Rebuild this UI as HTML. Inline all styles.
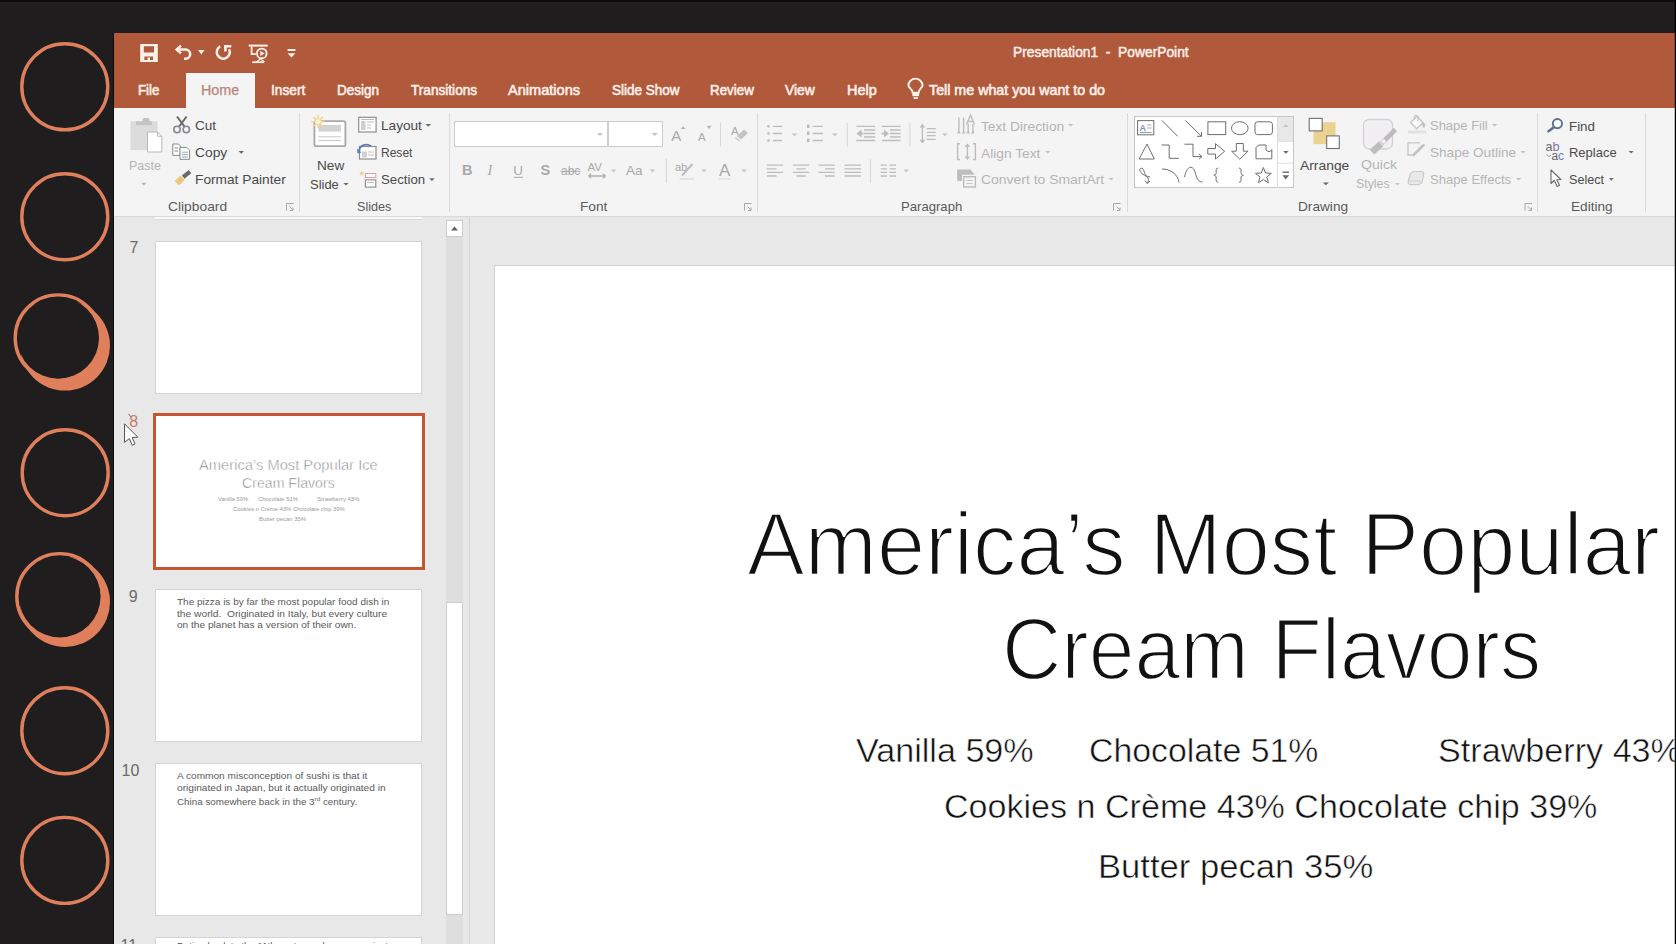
<!DOCTYPE html>
<html><head><meta charset="utf-8">
<style>
html,body{margin:0;padding:0;}
body{width:1676px;height:944px;overflow:hidden;position:relative;background:#1f1d1e;font-family:"Liberation Sans",sans-serif;}
.a{position:absolute;}
.t{position:absolute;white-space:pre;line-height:1;transform-origin:0 0;}
</style></head><body>
<!-- top very dark strip -->
<div class="a" style="left:0;top:0;width:1676px;height:2px;background:#0c0b0b"></div>
<!-- circles -->
<svg class="a" style="left:0;top:0" width="113" height="944" viewBox="0 0 113 944">
 <g fill="#e07f5b">
  <circle cx="65" cy="345.6" r="45"/>
  <circle cx="65" cy="602" r="45"/>
 </g>
 <g fill="#1f1d1e">
  <circle cx="58.2" cy="337.9" r="40.8"/>
  <circle cx="59.8" cy="596.6" r="40.8"/>
 </g>
 <g fill="none" stroke="#e07f5b" stroke-width="3.4">
  <circle cx="64.8" cy="86.8" r="43"/>
  <circle cx="64.8" cy="216.8" r="43"/>
  <circle cx="65.2" cy="472.7" r="43"/>
  <circle cx="64.8" cy="730.7" r="43"/>
  <circle cx="64.8" cy="860.4" r="43"/>
  <circle cx="58.2" cy="337.9" r="43"/>
  <circle cx="59.8" cy="596.6" r="43"/>
 </g>
</svg>
<!-- app window -->
<div class="a" style="left:113px;top:33px;width:1563px;height:911px;background:#e8e8e8"></div>
<div class="a" style="left:113px;top:33px;width:1px;height:911px;background:#0a0a0a"></div>
<div class="a" style="left:114px;top:33px;width:1562px;height:75px;background:#b15a3b"></div>
<div class="a" style="left:186px;top:73px;width:69px;height:35px;background:#f4f4f4"></div>
<div class="a" style="left:114px;top:108px;width:1562px;height:109px;background:#f4f4f4"></div>
<div class="a" style="left:114px;top:216px;width:1562px;height:1px;background:#d9d9d9"></div>

<!-- group separators -->
<div class="a" style="left:299px;top:113px;width:1px;height:99px;background:#dadada"></div>
<div class="a" style="left:449px;top:113px;width:1px;height:99px;background:#dadada"></div>
<div class="a" style="left:757px;top:113px;width:1px;height:99px;background:#dadada"></div>
<div class="a" style="left:1127px;top:113px;width:1px;height:99px;background:#dadada"></div>
<div class="a" style="left:1537px;top:113px;width:1px;height:99px;background:#dadada"></div>
<div class="a" style="left:1645px;top:113px;width:1px;height:99px;background:#dadada"></div>

<!-- font boxes -->
<div class="a" style="left:454px;top:121px;width:154px;height:26px;background:#fff;border:1px solid #cdcdcd;box-sizing:border-box"></div>
<div class="a" style="left:608px;top:121px;width:55px;height:26px;background:#fff;border:1px solid #cdcdcd;box-sizing:border-box"></div>

<!-- shapes gallery -->
<div class="a" style="left:1134px;top:116px;width:160px;height:72px;background:#fff;border:1px solid #c6c6c6;box-sizing:border-box"></div>
<div class="a" style="left:1277px;top:117px;width:16px;height:24px;background:#e8e8e8"></div>
<div class="a" style="left:1277px;top:116px;width:1px;height:72px;background:#dcdcdc"></div>

<!-- slide panel -->
<div class="a" style="left:155px;top:217px;width:267px;height:2px;background:#fafafa;border-bottom:1px solid #d8d8d8"></div>
<div class="a" style="left:155px;top:241px;width:267px;height:153px;background:#fff;border:1px solid #d4d4d4;box-sizing:border-box"></div>
<div class="a" style="left:152.5px;top:413px;width:272px;height:157px;background:#fff;border:3px solid #c4572f;box-sizing:border-box"></div>
<div class="a" style="left:155px;top:589px;width:267px;height:153px;background:#fff;border:1px solid #d4d4d4;box-sizing:border-box"></div>
<div class="a" style="left:155px;top:763px;width:267px;height:153px;background:#fff;border:1px solid #d4d4d4;box-sizing:border-box"></div>
<div class="a" style="left:155px;top:937px;width:267px;height:153px;background:#fff;border:1px solid #d4d4d4;box-sizing:border-box"></div>
<!-- scrollbar -->
<div class="a" style="left:446px;top:220px;width:17px;height:724px;background:#dedede"></div>
<div class="a" style="left:446px;top:220px;width:17px;height:17px;background:#fff;border:1px solid #cdcdcd;box-sizing:border-box"></div>
<svg class="a" style="left:446px;top:220px" width="17" height="17"><path d="M5 10.5 L8.5 6.5 L12 10.5 Z" fill="#606060"/></svg>
<div class="a" style="left:446px;top:602px;width:17px;height:313px;background:#fff;border:1px solid #cdcdcd;box-sizing:border-box"></div>
<div class="a" style="left:468.5px;top:217px;width:1.5px;height:727px;background:#d2d2d2"></div>

<!-- main slide -->
<div class="a" style="left:494px;top:265px;width:1182px;height:679px;background:#fff;border-left:1px solid #d2d2d2;border-top:1px solid #d2d2d2;box-sizing:border-box"></div>

<!--ICONS_START--><svg class="a" style="left:0;top:0" width="1676" height="944" viewBox="0 0 1676 944">
<!-- ===== QAT (white) ===== -->
<g fill="#fdf1ec" stroke="none">
 <!-- save -->
 <path d="M140.2 44 H157.8 V61.9 H140.2 Z M143.8 46.3 V52.5 H154 V46.3 Z M144.4 56.5 V59.9 H147.5 V57.6 H150 V59.9 H153 V56.5 Z" fill-rule="evenodd"/>
 <!-- undo dropdown -->
 <path d="M198 50 H204.5 L201.25 54.6 Z"/>
 <!-- customize -->
 <rect x="287.6" y="49" width="7.8" height="2"/>
 <path d="M287.6 53.2 H295.4 L291.5 57.4 Z"/>
</g>
<g fill="none" stroke="#fdf1ec" stroke-width="2.5" stroke-linecap="butt">
 <!-- undo -->
 <path d="M181 45.6 L176.6 49.5 L181 53.4" stroke-linejoin="miter"/>
 <path d="M176.5 49.5 H185.6 A4.6 4.6 0 0 1 185.6 58.7 H184"/>
 <!-- redo circle -->
 <path d="M220.2 46.4 A6.5 6.5 0 1 0 229.1 49.2"/>
 <path d="M231.3 46.2 H225.4 V51.6" stroke-width="2.6"/>
 <!-- presenter -->
 <path d="M248.7 45.6 H267.7" stroke-width="2"/>
 <path d="M251.6 46.6 V54.2 H256" stroke-width="1.8"/>
 <circle cx="261.8" cy="53.4" r="4.8" stroke-width="1.8"/>
 <path d="M252.2 62.2 H264" stroke-width="1.8"/>
 <path d="M256.5 62 L261.5 58 M264.5 62 L259.5 58" stroke-width="1.3"/>
</g>
<g fill="#fdf1ec">
 <path d="M260.3 50.8 L264.6 53.4 L260.3 56 Z"/>
</g>
<!-- bulb -->
<g fill="none" stroke="#fdf1ec" stroke-width="1.9">
 <path d="M912.6 92.6 C912.6 89 908.4 87.5 908.4 85.7 A6.9 6.9 0 1 1 922.5 85.7 C922.5 87.5 918.8 89 918.8 92.6 Z"/>
</g>
<rect x="912.4" y="92.6" width="6.6" height="3.6" fill="#fdf1ec"/>
<rect x="913.6" y="97.2" width="4.3" height="1.8" fill="#fdf1ec"/>

<!-- ===== Clipboard ===== -->
<rect x="130.5" y="121.3" width="27.1" height="28.8" fill="#dcdcdc"/>
<rect x="136" y="121.3" width="16" height="3.8" fill="#c3c3c3"/>
<rect x="142.5" y="118" width="7" height="4.2" rx="1.5" fill="#c3c3c3"/>
<path d="M147.5 132 H157.5 L161.8 136.3 V152 H147.5 Z" fill="#fff" stroke="#b9b9b9" stroke-width="1"/>
<path d="M157.5 132 V136.3 H161.8" fill="none" stroke="#b9b9b9" stroke-width="1"/>
<path d="M141.1 182.8 H146.6 L143.85 185.4 Z" fill="#b5b5b5"/>
<!-- scissors -->
<path d="M177 116.5 L184.8 127 M186.6 116.5 L178.8 127" stroke="#6a6a6a" stroke-width="2" fill="none"/>
<circle cx="177" cy="129.5" r="3.2" fill="none" stroke="#85879a" stroke-width="1.6"/>
<circle cx="186.3" cy="129.5" r="3.2" fill="none" stroke="#85879a" stroke-width="1.6"/>
<!-- copy -->
<path d="M172.8 144 H178.5 L180.2 145.8 V155.4 H172.8 Z" fill="#fff" stroke="#888" stroke-width="1"/>
<path d="M174.5 148 H178 M174.5 151 H178" stroke="#777" stroke-width="0.9"/>
<path d="M180 147.4 H186.8 L189.6 150.2 V159.3 H180 Z" fill="#fff" stroke="#888" stroke-width="1"/>
<path d="M181.8 152.2 H188 M181.8 154.6 H188 M181.8 157 H188" stroke="#8a9ab5" stroke-width="0.9"/>
<!-- format painter -->
<path d="M176.8 183.2 L182.6 177.8" stroke="#e8c97c" stroke-width="6.2"/>
<path d="M183.2 177.2 L190 171.6" stroke="#6a6a6a" stroke-width="4.2"/>

<!-- dropdown arrows in ribbon -->
<g fill="#6a6a6a">
 <path d="M238.5 151 H244 L241.25 153.8 Z"/>
 <path d="M343.3 183 H348.6 L345.95 185.6 Z"/>
 <path d="M425.5 124 H431 L428.25 126.8 Z"/>
 <path d="M429.2 178.2 H434.7 L431.95 181 Z"/>
 <path d="M1322.9 182.5 H1328.8 L1325.85 185.3 Z"/>
 <path d="M1628.6 151 H1633.6 L1631.1 153.6 Z"/>
 <path d="M1609 178.1 H1613.7 L1611.35 180.7 Z"/>
 <path d="M1283.1 151 H1288.7 L1285.9 153.7 Z"/>
 <rect x="1282.5" y="171.5" width="6.6" height="1.4"/>
 <path d="M1282.5 175.3 H1289.1 L1285.8 179.4 Z"/>
</g>
<g fill="#c4c4c4">
 <path d="M597 133 H603 L600 136 Z"/>
 <path d="M651.6 133 H657.9 L654.75 136 Z"/>
 <path d="M611 169.6 H616.3 L613.65 172.3 Z"/>
 <path d="M649.4 169.6 H655.2 L652.3 172.3 Z"/>
 <path d="M701.3 169.6 H706.7 L704 172.3 Z"/>
 <path d="M741.2 169.6 H747 L744.1 172.3 Z"/>
 <path d="M791.7 133.5 H797.4 L794.55 136.2 Z"/>
 <path d="M832 133.5 H837.7 L834.85 136.2 Z"/>
 <path d="M942 133.5 H947.6 L944.8 136.2 Z"/>
 <path d="M903.4 169.6 H909.1 L906.25 172.3 Z"/>
 <path d="M1068 124 H1073.5 L1070.75 126.6 Z"/>
 <path d="M1045 151 H1050.5 L1047.75 153.6 Z"/>
 <path d="M1108.3 178 H1113.8 L1111.05 180.6 Z"/>
 <path d="M1394.9 183 H1399.9 L1397.4 185.5 Z"/>
 <path d="M1492 124 H1497.3 L1494.65 126.6 Z"/>
 <path d="M1520.5 151 H1525.8 L1523.15 153.6 Z"/>
 <path d="M1516 178 H1521.3 L1518.65 180.6 Z"/>
 <path d="M1283 127 H1288.6 L1285.8 124.3 Z"/>
</g>
<!-- launchers -->
<g fill="none" stroke="#a8a8a8" stroke-width="1">
 <path d="M286.5 210.5 V203.5 H293.5"/><path d="M289.5 206.5 L293 210 M293 207.5 V210.5 H290"/>
 <path d="M744.5 210.5 V203.5 H751.5"/><path d="M747.5 206.5 L751 210 M751 207.5 V210.5 H748"/>
 <path d="M1113.5 210.5 V203.5 H1120.5"/><path d="M1116.5 206.5 L1120 210 M1120 207.5 V210.5 H1117"/>
 <path d="M1525 210.5 V203.5 H1532"/><path d="M1528 206.5 L1531.5 210 M1531.5 207.5 V210.5 H1528.5"/>
</g>

<!-- ===== Slides ===== -->
<rect x="314.4" y="121.2" width="31" height="25" rx="2" fill="#fff" stroke="#a9a9a9" stroke-width="1.8"/>
<rect x="318.5" y="125" width="22.5" height="6.6" fill="#d3d3d3"/>
<path d="M318.5 136.8 H341 M318.5 140.6 H341" stroke="#c6c6c6" stroke-width="1"/>
<g stroke="#f0d48a" stroke-width="1.4">
 <path d="M318.1 115 V128.4 M311.4 121.7 H324.8 M313.4 117 L322.8 126.4 M322.8 117 L313.4 126.4"/>
</g>
<circle cx="318.1" cy="121.7" r="3.2" fill="#fbf3dc" stroke="#f0d48a" stroke-width="1"/>
<!-- layout -->
<rect x="358.7" y="117.3" width="17.4" height="14.7" fill="#fff" stroke="#8d8d8d" stroke-width="1.2"/>
<rect x="361" y="121" width="4.5" height="9" fill="#cfcfcf"/>
<path d="M361 119.5 H374 M367 122 H374 M367 125 H371 M367 128 H371" stroke="#bdbdbd" stroke-width="1"/>
<!-- reset -->
<rect x="359.5" y="146.5" width="16.5" height="12.5" fill="#fff" stroke="#8d8d8d" stroke-width="1.2"/>
<rect x="362" y="151.5" width="5" height="6" fill="#d0d0d0"/>
<path d="M368 152 H374 M368 155 H374" stroke="#bdbdbd" stroke-width="1"/>
<path d="M359.5 151 A7 5.5 0 0 1 371 146" fill="none" stroke="#5b7fb5" stroke-width="1.8"/>
<path d="M357 148.5 L361.5 152.5 L357.5 153.5 Z" fill="#5b7fb5"/>
<!-- section -->
<rect x="365.4" y="173.5" width="10.4" height="4" fill="#fff" stroke="#d9a0a0" stroke-width="1"/>
<rect x="365.4" y="179.9" width="10.4" height="7.2" fill="#fff" stroke="#8d8d8d" stroke-width="1.1"/>
<path d="M367 182.5 H374" stroke="#bbb" stroke-width="1"/>
<path d="M361.7 170.4 L362.5 172.3 L364.5 172.7 L363 174 L363.4 175.8 L361.7 174.8 L360 175.8 L360.4 174 L359 172.7 L361 172.3 Z" fill="#efd38c"/>

<!-- ===== Font icons (disabled gray) ===== -->
<g fill="#a9a9a9" font-family="Liberation Sans" >
 <text x="462" y="175.3" font-size="14.5" font-weight="bold">B</text>
 <text x="487.6" y="175.3" font-size="14.5" font-style="italic" font-family="Liberation Serif">I</text>
 <text x="513.3" y="175.3" font-size="13.5">U</text>
 <text x="540.5" y="175.3" font-size="14.5" font-weight="bold">S</text>
 <text x="561" y="175.3" font-size="12">abc</text>
 <text x="587.5" y="170.6" font-size="11.5">AV</text>
 <text x="671.2" y="141" font-size="15">A</text>
 <text x="698" y="141" font-size="11.5">A</text>
 <text x="626" y="175.2" font-size="13.5">Aa</text>
 <text x="719" y="176.4" font-size="17">A</text>
 <text x="731" y="134.7" font-size="11.5">A</text>
 <text x="675" y="170.5" font-size="11">ab</text>
</g>
<path d="M513.7 177.4 H523" stroke="#b5b5b5" stroke-width="1.2"/>
<path d="M560.5 171.3 H580.5" stroke="#a9a9a9" stroke-width="1"/>
<path d="M588.5 176 H605.5 M588.5 176 L591 173.8 M588.5 176 L591 178.2 M605.5 176 L603 173.8 M605.5 176 L603 178.2" stroke="#b0b0b0" stroke-width="1.3" fill="none"/>
<path d="M680.7 128.9 L683.15 126.2 L685.6 128.9 Z M706.7 125.7 H711.6 L709.15 128.9 Z" fill="#b5b5b5"/>
<path d="M737 136 L744 129.5 L748 133 L741 139.5 Z" fill="#c3c3c3"/>
<path d="M735.5 137.5 L739.5 141" stroke="#c8c8c8" stroke-width="1.5"/>
<path d="M682 175.5 L692.5 164" stroke="#bcbcbc" stroke-width="2"/><path d="M679.5 179 H694" stroke="#e3e3e3" stroke-width="2"/>
<rect x="719" y="178" width="11.5" height="2" fill="#e6e6e6"/>
<path d="M720.6 122.6 V146.3 M666.4 158.9 V183 M847.3 123 V146.7 M909.9 123 V146.7 M870.5 159.2 V183" stroke="#d6d6d6" stroke-width="1"/>

<!-- ===== Paragraph icons ===== -->
<g stroke="#bdbdbd" stroke-width="1.3" fill="none">
 <path d="M773 126.3 H782.1 M773 133.5 H782.1 M773 140.5 H782.1"/>
 <path d="M812.7 126.3 H822.9 M812.7 133.5 H822.9 M812.7 140.5 H822.9"/>
 <path d="M856.4 126.3 H875.1 M864 130 H875.1 M864 133.5 H875.1 M864 137 H875.1 M856.4 140.5 H875.1"/>
 <path d="M881.9 126.3 H900.6 M890 130 H900.6 M890 133.5 H900.6 M890 137 H900.6 M881.9 140.5 H900.6"/>
 <path d="M926.7 128.6 H935.7 M926.7 132.4 H935.7 M926.7 135.7 H935.7 M926.7 139.4 H935.7"/>
 <path d="M922.4 126 V142"/>
 <path d="M766.8 165.2 H783.2 M766.8 168.8 H776.5 M766.8 172.3 H783.2 M766.8 176 H776.5"/>
 <path d="M792.9 165.2 H809.3 M796.5 168.8 H805.7 M792.9 172.3 H809.3 M796.5 176 H805.7"/>
 <path d="M818.4 165.2 H834.8 M825 168.8 H834.8 M818.4 172.3 H834.8 M825 176 H834.8"/>
 <path d="M844.5 165.2 H860.9 M844.5 168.8 H860.9 M844.5 172.3 H860.9 M844.5 176 H860.9"/>
 <path d="M880.7 165.2 H887 M889.5 165.2 H896 M880.7 168.8 H887 M889.5 168.8 H896 M880.7 172.3 H887 M889.5 172.3 H896 M880.7 176 H887 M889.5 176 H896"/>
</g>
<g fill="#bdbdbd">
 <circle cx="768.5" cy="126.3" r="1.3"/><circle cx="768.5" cy="133.5" r="1.3"/><circle cx="768.5" cy="140.5" r="1.3"/>
 <rect x="807" y="124.5" width="2.5" height="3.5"/><rect x="807" y="131.5" width="2.5" height="3.5"/><rect x="807" y="138.5" width="2.5" height="3.5"/>
 <path d="M856.4 133.5 L861.5 129.5 V137.5 Z"/><rect x="860" y="132.5" width="3.5" height="2"/>
 <path d="M889 133.5 L884 129.5 V137.5 Z"/><rect x="881.5" y="132.5" width="3.5" height="2"/>
 <path d="M922.4 123.8 L919.5 127.5 H925.3 Z M922.4 143.5 L919.5 139.8 H925.3 Z"/>
</g>
<!-- text direction, align, convert -->
<g stroke="#bdbdbd" stroke-width="1.4" fill="none">
 <path d="M958.9 117.5 V132 M963.6 117.5 V132 M968.2 124 V132 M972.9 124 V132"/>
 <path d="M966.5 124.5 L970.5 115 L974.5 124.5 M967.8 121.5 H973.2"/>
 <path d="M960 143.8 H957.6 V159.5 H960 M973 143.8 H975.4 V159.5 H973"/>
 <path d="M967.4 146 V157.5"/>
 <path d="M963.7 176.8 H975.4 V187 H963.7 Z"/>
 <path d="M966.5 180.5 H972.5 M966.5 183.5 H972.5" stroke-width="0.9"/>
</g>
<g fill="#bdbdbd">
 <path d="M957 133.5 L958.9 130.5 L960.8 133.5 Z M961.7 133.5 L963.6 130.5 L965.5 133.5 Z M966.3 133.5 L968.2 130.5 L970.1 133.5 Z M971 133.5 L972.9 130.5 L974.8 133.5 Z" transform="translate(0,0) scale(1,1)"/>
 <path d="M967.4 143.5 L964.5 147 H970.3 Z M967.4 160 L964.5 156.5 H970.3 Z"/>
 <path d="M957.2 169.6 H970.5 L974.6 174.7 H962 V181 H957.2 Z"/>
</g>

<!-- ===== Shapes gallery ===== -->
<g fill="none" stroke="#6e6e6e" stroke-width="1">
 <rect x="1137.6" y="120.6" width="16.2" height="14.2"/>
 <path d="M1140 132.5 H1151.5" stroke="#999"/>
 <path d="M1147 125 H1151.5 M1147 128 H1151.5" stroke="#aaa"/>
 <path d="M1161.9 120.4 L1177.7 136.3"/>
 <path d="M1185.3 120.4 L1201.5 136.3 M1201.5 136.3 V132 M1201.5 136.3 H1197"/>
 <rect x="1207.9" y="121.8" width="17.8" height="12.8"/>
 <ellipse cx="1239.8" cy="128.2" rx="8.3" ry="6.5"/>
 <rect x="1255" y="121.8" width="17.4" height="12.8" rx="2.5"/>
 <path d="M1147 144 L1154.3 159 H1139.1 Z"/>
 <path d="M1161.5 145 H1169.2 V158.3 H1179"/>
 <path d="M1184.5 144.2 H1193 V156.6 H1202 M1202 156.6 L1199 154 M1202 156.6 L1199 159.2"/>
 <path d="M1207.8 148.5 H1215.5 V143.6 L1224.6 151.3 L1215.5 159 V154.1 H1207.8 Z"/>
 <path d="M1236.3 143.5 H1243.3 V151.2 H1248 L1239.8 159.2 L1231.6 151.2 H1236.3 Z"/>
 <path d="M1258.5 145 H1266 V147.5 A2.6 2.6 0 0 0 1271.8 149.5 V158.8 H1256 V147.5 Z"/>
 <path d="M1150 177 C1143 176 1146 172 1142 168 C1138 169 1139.5 173 1146 176 C1150 178 1148 183 1147 183.5"/>
 <path d="M1147 183.5 L1145 180.5 M1147 183.5 L1150 181"/>
 <path d="M1162 169 C1170 169 1178 174 1179 182.5"/>
 <path d="M1184.5 177 C1187 165 1193 165 1195 172 C1197 180 1199 182 1202.6 182"/>
 <path d="M1218.2 168 C1215.6 168 1216.2 170.5 1216.2 172.5 C1216.2 174.3 1215.5 175 1213.8 175.2 C1215.5 175.4 1216.2 176.2 1216.2 178 C1216.2 180 1215.6 182.2 1218.2 182.2"/>
 <path d="M1239 168 C1241.6 168 1241 170.5 1241 172.5 C1241 174.3 1241.7 175 1243.4 175.2 C1241.7 175.4 1241 176.2 1241 178 C1241 180 1241.6 182.2 1239 182.2"/>
 <path d="M1263.4 167.5 L1265.5 173 L1271.3 173.3 L1266.8 177 L1268.4 182.8 L1263.4 179.5 L1258.4 182.8 L1260 177 L1255.5 173.3 L1261.3 173 Z"/>
</g>
<text x="1139.5" y="131" font-family="Liberation Sans" font-size="9" font-weight="bold" fill="#7d8fc0">A</text>
<path d="M1277.6 141.4 H1293 M1277.6 163.2 H1293" stroke="#e1e1e1" stroke-width="1"/>

<!-- Arrange -->
<rect x="1313.5" y="122.2" width="22" height="22" fill="#ecd290"/>
<rect x="1309.2" y="118.4" width="13" height="12.5" fill="#fff" stroke="#707070" stroke-width="1.1"/>
<rect x="1326.7" y="135.9" width="12.6" height="12.6" fill="#fff" stroke="#707070" stroke-width="1.1"/>
<!-- Quick styles -->
<rect x="1363.5" y="119.5" width="29" height="29.5" rx="5.5" fill="#f1eff2" stroke="#d2d2d2" stroke-width="1.3"/>
<path d="M1395.5 129.5 L1381.5 143.5" stroke="#bdbdbd" stroke-width="4.6"/>
<path d="M1381 144 L1372 152.2" stroke="#bdbdbd" stroke-width="6.5"/>
<circle cx="1383.5" cy="141.5" r="2.2" fill="#f1eff2"/>
<!-- shape fill / outline / effects -->
<path d="M1410.5 122.5 L1417 116.5 L1423 122.8 L1416.8 128.8 Z" fill="#fafafa" stroke="#c6c6c6" stroke-width="1.4"/>
<path d="M1414.5 118.8 C1413.5 115 1417.5 114 1418.5 117.5 L1417.5 121" fill="none" stroke="#c6c6c6" stroke-width="1.2"/>
<path d="M1422.5 121.5 L1425.5 124.5 L1424 128.5 L1422 125 Z" fill="#c2c2c2"/>
<rect x="1408" y="130.5" width="18" height="3" fill="#e2e2e2"/>
<path d="M1420 142.8 H1408 V155 H1413" fill="none" stroke="#c6c6c6" stroke-width="1.3"/>
<path d="M1424.5 144.5 L1414.5 154.8 L1413 156 L1414 154 L1423 145" fill="none" stroke="#c3c3c3" stroke-width="2"/>
<path d="M1410.5 173.5 Q1412 171.5 1415 171.5 H1421 Q1424 171.5 1423.6 174.5 L1422.3 181 Q1421.5 184.6 1418 184.6 H1411 Q1407.8 184.6 1408.2 181.5 Z" fill="#e9e9e9" stroke="#c9c9c9" stroke-width="1.2"/><path d="M1409 181 H1421" stroke="#d2d2d2" stroke-width="1"/>
<!-- find replace select -->
<circle cx="1557.4" cy="123.6" r="4.6" fill="#fff" stroke="#5d6f90" stroke-width="1.9"/>
<path d="M1553.9 127.2 L1548.5 131.2" stroke="#5d6f90" stroke-width="2.6" stroke-linecap="round"/>
<text x="1545.4" y="151.3" font-family="Liberation Sans" font-size="12" fill="#6e6e6e" transform="translate(1545.4 151.3) scale(1.05 1) translate(-1545.4 -151.3)">a<tspan fill="#7d70a8">b</tspan></text>
<text x="1551.4" y="160.2" font-family="Liberation Sans" font-size="12" fill="#666">a<tspan fill="#6a7fb8">c</tspan></text>
<path d="M1546.5 154.5 L1549 156.5 L1551 155" stroke="#8ea0c8" stroke-width="1" fill="none"/>
<path d="M1551 170 V183.5 L1554.2 180.5 L1557.2 186.5 L1559.5 185.3 L1556.8 179.7 L1560.8 179.5 Z" fill="#fff" stroke="#6a6a6a" stroke-width="1.1" stroke-linejoin="round"/>

<!-- ===== Slide panel cursor ===== -->
<path d="M124.5 423.8 V442.4 L129.3 438.6 L132.3 445.3 L135 444 L132.2 437.5 L137.8 437.2 Z" fill="#fff" stroke="#555" stroke-width="1" stroke-linejoin="round"/>
<path d="M128.5 413.8 L131 417" stroke="#555" stroke-width="0.9"/>
</svg>
<!--ICONS_END-->
<span class="t" style="left:1013.1px;top:44.9px;font-size:14.5px;color:#fbeee9;font-weight:normal;transform:scaleX(0.9519);-webkit-text-stroke:0.5px #fbeee9;">Presentation1  -  PowerPoint</span>
<span class="t" style="left:138.3px;top:83.3px;font-size:14.5px;color:#fbeee9;font-weight:normal;transform:scaleX(0.9159);-webkit-text-stroke:0.6px #fbeee9;">File</span>
<span class="t" style="left:270.8px;top:83.3px;font-size:14.5px;color:#fbeee9;font-weight:normal;transform:scaleX(0.9458);-webkit-text-stroke:0.6px #fbeee9;">Insert</span>
<span class="t" style="left:336.9px;top:83.3px;font-size:14.5px;color:#fbeee9;font-weight:normal;transform:scaleX(0.9305);-webkit-text-stroke:0.6px #fbeee9;">Design</span>
<span class="t" style="left:410.7px;top:83.3px;font-size:14.5px;color:#fbeee9;font-weight:normal;transform:scaleX(0.9392);-webkit-text-stroke:0.6px #fbeee9;">Transitions</span>
<span class="t" style="left:508.0px;top:83.3px;font-size:14.5px;color:#fbeee9;font-weight:normal;transform:scaleX(1.0038);-webkit-text-stroke:0.6px #fbeee9;">Animations</span>
<span class="t" style="left:611.5px;top:83.3px;font-size:14.5px;color:#fbeee9;font-weight:normal;transform:scaleX(0.9305);-webkit-text-stroke:0.6px #fbeee9;">Slide Show</span>
<span class="t" style="left:710.2px;top:83.3px;font-size:14.5px;color:#fbeee9;font-weight:normal;transform:scaleX(0.9213);-webkit-text-stroke:0.6px #fbeee9;">Review</span>
<span class="t" style="left:785.2px;top:83.3px;font-size:14.5px;color:#fbeee9;font-weight:normal;transform:scaleX(0.9562);-webkit-text-stroke:0.6px #fbeee9;">View</span>
<span class="t" style="left:846.7px;top:83.3px;font-size:14.5px;color:#fbeee9;font-weight:normal;transform:scaleX(0.9959);-webkit-text-stroke:0.6px #fbeee9;">Help</span>
<span class="t" style="left:929.3px;top:83.3px;font-size:14.5px;color:#fbeee9;font-weight:normal;transform:scaleX(0.9836);-webkit-text-stroke:0.6px #fbeee9;">Tell me what you want to do</span>
<span class="t" style="left:200.9px;top:83.3px;font-size:14.5px;color:#b5857b;font-weight:normal;transform:scaleX(0.9850);-webkit-text-stroke:0.25px #b5857b;">Home</span>
<span class="t" style="left:128.6px;top:159.1px;font-size:13.5px;color:#b4b4b4;font-weight:normal;transform:scaleX(0.9270);">Paste</span>
<span class="t" style="left:195.2px;top:119.4px;font-size:13.5px;color:#4a4a4a;font-weight:normal;transform:scaleX(1.0044);">Cut</span>
<span class="t" style="left:195.2px;top:145.8px;font-size:13.5px;color:#4a4a4a;font-weight:normal;transform:scaleX(1.0217);">Copy</span>
<span class="t" style="left:195.4px;top:172.8px;font-size:13.5px;color:#4a4a4a;font-weight:normal;transform:scaleX(1.0159);">Format Painter</span>
<span class="t" style="left:167.9px;top:200.1px;font-size:13.5px;color:#5a5a5a;font-weight:normal;transform:scaleX(1.0228);">Clipboard</span>
<span class="t" style="left:316.6px;top:159.0px;font-size:13.5px;color:#4a4a4a;font-weight:normal;transform:scaleX(1.0109);">New</span>
<span class="t" style="left:310.0px;top:177.5px;font-size:13.5px;color:#4a4a4a;font-weight:normal;transform:scaleX(0.9594);">Slide</span>
<span class="t" style="left:381.1px;top:119.0px;font-size:13.5px;color:#4a4a4a;font-weight:normal;transform:scaleX(1.0091);">Layout</span>
<span class="t" style="left:381.1px;top:145.7px;font-size:13.5px;color:#4a4a4a;font-weight:normal;transform:scaleX(0.8904);">Reset</span>
<span class="t" style="left:381.1px;top:173.0px;font-size:13.5px;color:#4a4a4a;font-weight:normal;transform:scaleX(0.9794);">Section</span>
<span class="t" style="left:357.3px;top:200.1px;font-size:13.5px;color:#5a5a5a;font-weight:normal;transform:scaleX(0.9328);">Slides</span>
<span class="t" style="left:579.5px;top:200.0px;font-size:13.5px;color:#5a5a5a;font-weight:normal;transform:scaleX(1.0143);">Font</span>
<span class="t" style="left:980.6px;top:119.7px;font-size:13.5px;color:#b4b4b4;font-weight:normal;transform:scaleX(1.0174);">Text Direction</span>
<span class="t" style="left:980.6px;top:146.9px;font-size:13.5px;color:#b4b4b4;font-weight:normal;transform:scaleX(1.0200);">Align Text</span>
<span class="t" style="left:980.6px;top:173.0px;font-size:13.5px;color:#b4b4b4;font-weight:normal;transform:scaleX(1.0328);">Convert to SmartArt</span>
<span class="t" style="left:901.3px;top:200.2px;font-size:13.5px;color:#5a5a5a;font-weight:normal;transform:scaleX(0.9708);">Paragraph</span>
<span class="t" style="left:1300.4px;top:158.5px;font-size:13.5px;color:#4a4a4a;font-weight:normal;transform:scaleX(1.0265);">Arrange</span>
<span class="t" style="left:1360.5px;top:157.9px;font-size:13.5px;color:#b4b4b4;font-weight:normal;transform:scaleX(1.0432);">Quick</span>
<span class="t" style="left:1356.4px;top:177.1px;font-size:13.5px;color:#b4b4b4;font-weight:normal;transform:scaleX(0.9140);">Styles</span>
<span class="t" style="left:1297.9px;top:200.2px;font-size:13.5px;color:#5a5a5a;font-weight:normal;transform:scaleX(1.0118);">Drawing</span>
<span class="t" style="left:1430.2px;top:118.6px;font-size:13.5px;color:#b4b4b4;font-weight:normal;transform:scaleX(0.9612);">Shape Fill</span>
<span class="t" style="left:1430.2px;top:146.2px;font-size:13.5px;color:#b4b4b4;font-weight:normal;transform:scaleX(1.0063);">Shape Outline</span>
<span class="t" style="left:1430.2px;top:173.0px;font-size:13.5px;color:#b4b4b4;font-weight:normal;transform:scaleX(0.9677);">Shape Effects</span>
<span class="t" style="left:1568.9px;top:119.5px;font-size:13.5px;color:#4a4a4a;font-weight:normal;transform:scaleX(0.9862);">Find</span>
<span class="t" style="left:1568.9px;top:146.2px;font-size:13.5px;color:#4a4a4a;font-weight:normal;transform:scaleX(0.9610);">Replace</span>
<span class="t" style="left:1568.9px;top:173.0px;font-size:13.5px;color:#4a4a4a;font-weight:normal;transform:scaleX(0.9355);">Select</span>
<span class="t" style="left:1570.6px;top:200.1px;font-size:13.5px;color:#5a5a5a;font-weight:normal;transform:scaleX(1.0102);">Editing</span>
<span class="t" style="left:129.5px;top:240.0px;font-size:16px;color:#6a6a6a;font-weight:normal;">7</span>
<span class="t" style="left:129.3px;top:414.1px;font-size:16px;color:#c77a62;font-weight:normal;">8</span>
<span class="t" style="left:128.8px;top:588.5px;font-size:16px;color:#6a6a6a;font-weight:normal;">9</span>
<span class="t" style="left:121.5px;top:762.5px;font-size:16px;color:#6a6a6a;font-weight:normal;">10</span>
<span class="t" style="left:120.5px;top:938.0px;font-size:16px;color:#6a6a6a;font-weight:normal;">11</span>
<span class="t" style="left:199.4px;top:457.1px;font-size:15px;color:#7c7c7c;font-weight:normal;transform:scaleX(0.9808);-webkit-text-stroke:0.5px #fff;">America’s Most Popular Ice</span>
<span class="t" style="left:242.0px;top:474.5px;font-size:15px;color:#7c7c7c;font-weight:normal;transform:scaleX(0.9426);-webkit-text-stroke:0.5px #fff;">Cream Flavors</span>
<span class="t" style="left:218.2px;top:497.1px;font-size:5.5px;color:#9a9a9a;font-weight:normal;transform:scaleX(1.0475);">Vanilla 59%</span>
<span class="t" style="left:257.5px;top:497.1px;font-size:5.5px;color:#9a9a9a;font-weight:normal;transform:scaleX(1.0723);">Chocolate 51%</span>
<span class="t" style="left:317.0px;top:497.1px;font-size:5.5px;color:#9a9a9a;font-weight:normal;transform:scaleX(1.0862);">Strawberry 43%</span>
<span class="t" style="left:233.0px;top:506.8px;font-size:5.5px;color:#9a9a9a;font-weight:normal;transform:scaleX(1.0590);">Cookies n Crème 43% Chocolate chip 39%</span>
<span class="t" style="left:259.0px;top:516.8px;font-size:5.5px;color:#9a9a9a;font-weight:normal;transform:scaleX(1.0749);">Butter pecan 35%</span>
<span class="t" style="left:176.9px;top:598.1px;font-size:9.3px;color:#5a5a5a;font-weight:normal;transform:scaleX(1.0755);">The pizza is by far the most popular food dish in</span>
<span class="t" style="left:176.9px;top:609.8px;font-size:9.3px;color:#5a5a5a;font-weight:normal;transform:scaleX(1.0999);">the world.  Originated in Italy, but every culture</span>
<span class="t" style="left:176.9px;top:621.3px;font-size:9.3px;color:#5a5a5a;font-weight:normal;transform:scaleX(1.0869);">on the planet has a version of their own.</span>
<span class="t" style="left:176.9px;top:772.1px;font-size:9.3px;color:#5a5a5a;font-weight:normal;transform:scaleX(1.0866);">A common misconception of sushi is that it</span>
<span class="t" style="left:176.9px;top:783.8px;font-size:9.3px;color:#5a5a5a;font-weight:normal;transform:scaleX(1.0909);">originated in Japan, but it actually originated in</span>
<span class="t" style="left:176.9px;top:795.7px;font-size:9.3px;color:#5a5a5a;font-weight:normal;transform:scaleX(1.0562);">China somewhere back in the 3<span style="font-size:6px;vertical-align:4px">rd</span> century.</span>
<span class="t" style="left:176.9px;top:941.7px;font-size:9.3px;color:#5a5a5a;font-weight:normal;transform:scaleX(1.0385);">Dating back to the 11th century, a burger was just</span>
<span class="t" style="left:747.2px;top:500.0px;font-size:89px;color:#111;font-weight:normal;transform:scaleX(0.9729);-webkit-text-stroke:2.3px #fff;">America’s Most Popular</span>
<span class="t" style="left:1002.0px;top:605.1px;font-size:88px;color:#111;font-weight:normal;transform:scaleX(0.9342);-webkit-text-stroke:2.3px #fff;">Cream Flavors</span>
<span class="t" style="left:856.3px;top:733.5px;font-size:33px;color:#111;font-weight:normal;transform:scaleX(1.0341);-webkit-text-stroke:0.5px #fff;">Vanilla 59%</span>
<span class="t" style="left:1089.4px;top:733.5px;font-size:33px;color:#111;font-weight:normal;transform:scaleX(1.0245);-webkit-text-stroke:0.5px #fff;">Chocolate 51%</span>
<span class="t" style="left:1437.7px;top:733.5px;font-size:33px;color:#111;font-weight:normal;transform:scaleX(1.0351);-webkit-text-stroke:0.5px #fff;">Strawberry 43%</span>
<span class="t" style="left:944.0px;top:790.3px;font-size:33px;color:#111;font-weight:normal;transform:scaleX(1.0325);-webkit-text-stroke:0.5px #fff;">Cookies n Crème 43% Chocolate chip 39%</span>
<span class="t" style="left:1098.0px;top:850.0px;font-size:33px;color:#111;font-weight:normal;transform:scaleX(1.0494);-webkit-text-stroke:0.5px #fff;">Butter pecan 35%</span>

<div class="a" style="left:1675px;top:0;width:1px;height:944px;background:#000"></div><div class="a" style="left:1674px;top:0;width:1px;height:944px;background:rgba(0,0,0,0.25)"></div>
</body></html>
